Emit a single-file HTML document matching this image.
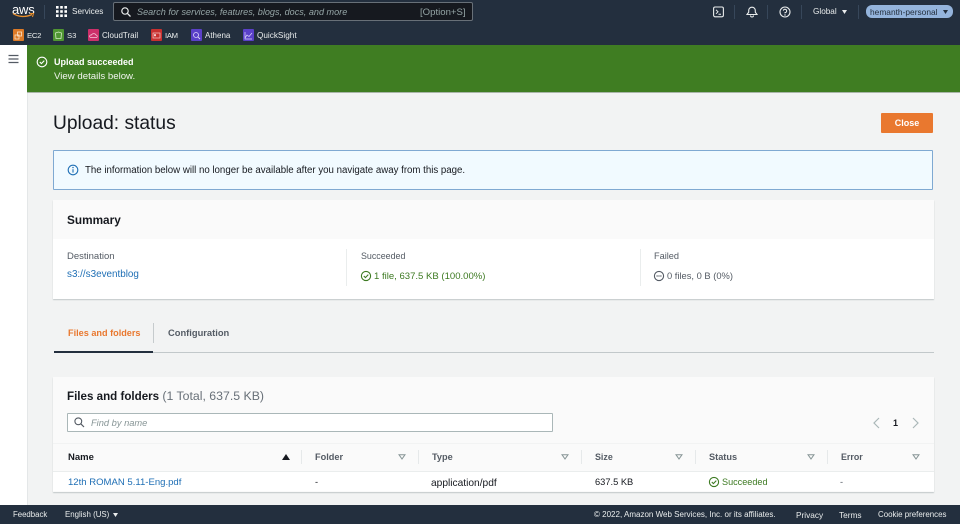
<!DOCTYPE html>
<html lang="en"><head><meta charset="utf-8"><title>Upload: status</title>
<style>
html,body{margin:0;padding:0}
body{width:960px;height:524px;overflow:hidden;position:relative;background:#f2f3f3;font-family:"Liberation Sans",sans-serif;font-size:9px;color:#16191f}
.a,.t,svg{position:absolute}
.t{white-space:nowrap;line-height:12px}
.b{font-weight:700}
.w{color:#eaeded}
.l{color:#1f6fb5}
.g{color:#3d7a22}
.m{color:#545b64}
.h{color:#545b64;font-weight:700}
.ic{width:11px;height:12px;border-radius:1px}
.sv{width:1px;height:14px;background:#e6e9ea;top:450px}
</style></head><body>

<div class="a" style="left:0;top:0;width:960px;height:45px;background:#232f3e"></div>
<div class="t" style="left:12px;top:2px;color:#fff;font-size:13px;line-height:16px;letter-spacing:-.2px">aws</div>
<svg style="left:12px;top:12px" width="23" height="7" viewBox="0 0 23 7"><path d="M1 1.5C6 5 14 5.5 20 2.5" fill="none" stroke="#ec912d" stroke-width="1.3"/><path d="M18 1.5L21.5 1.5L20.5 5" fill="none" stroke="#ec912d" stroke-width="1"/></svg>
<div class="a" style="left:44px;top:5px;width:1px;height:14px;background:#37475a"></div>
<svg style="left:56px;top:6px" width="11" height="11" viewBox="0 0 11 11" fill="#fff"><rect x="0" y="0" width="2.6" height="2.6"/><rect x="4.2" y="0" width="2.6" height="2.6"/><rect x="8.4" y="0" width="2.6" height="2.6"/><rect x="0" y="4.2" width="2.6" height="2.6"/><rect x="4.2" y="4.2" width="2.6" height="2.6"/><rect x="8.4" y="4.2" width="2.6" height="2.6"/><rect x="0" y="8.4" width="2.6" height="2.6"/><rect x="4.2" y="8.4" width="2.6" height="2.6"/><rect x="8.4" y="8.4" width="2.6" height="2.6"/></svg>
<div class="t w" style="left:72px;top:6px;font-size:8.2px">Services</div>

<div class="a" style="left:113px;top:2px;width:358px;height:17px;background:#16191f;border:1px solid #687078;border-radius:2px"></div>
<svg style="left:121px;top:7px" width="10" height="10" viewBox="0 0 10 10"><circle cx="4" cy="4" r="3.2" fill="none" stroke="#eaeded" stroke-width="1.2"/><path d="M6.4 6.4L9.5 9.5" stroke="#eaeded" stroke-width="1.3"/></svg>
<div class="t" style="left:137px;top:6px;font-style:italic;color:#95a5a6;font-size:9.1px">Search for services, features, blogs, docs, and more</div>
<div class="t" style="left:420px;top:7px;color:#95a5a6;font-size:9.6px">[Option+S]</div>

<svg style="left:713px;top:6px" width="11" height="12" viewBox="0 0 11 12"><rect x=".6" y="1" width="9.8" height="9.8" rx="1.5" fill="none" stroke="#eaeded" stroke-width="1.1"/><path d="M3 3.8L5 5.8L3 7.8M5.5 8.2H8" fill="none" stroke="#eaeded" stroke-width="1"/></svg>
<div class="a" style="left:734px;top:5px;width:1px;height:14px;background:#37475a"></div>
<svg style="left:746px;top:6px" width="12" height="12" viewBox="0 0 12 12"><path d="M1 8.5H11L9.3 6.2V4.5A3.3 3.3 0 0 0 2.7 4.5V6.2Z" fill="none" stroke="#eaeded" stroke-width="1.1"/><path d="M4.5 9.5A1.5 1.5 0 0 0 7.5 9.5" fill="none" stroke="#eaeded"/></svg>
<div class="a" style="left:767px;top:5px;width:1px;height:14px;background:#37475a"></div>
<svg style="left:779px;top:6px" width="12" height="12" viewBox="0 0 12 12"><circle cx="6" cy="6" r="5" fill="none" stroke="#eaeded" stroke-width="1.1"/><path d="M4.3 4.6A1.7 1.7 0 1 1 6 6.6V7.4" fill="none" stroke="#eaeded"/><circle cx="6" cy="9" r=".7" fill="#eaeded"/></svg>
<div class="a" style="left:801px;top:5px;width:1px;height:14px;background:#37475a"></div>
<div class="t w" style="left:813px;top:6px;font-size:8.2px">Global</div>
<svg style="left:842px;top:10px" width="5" height="4" viewBox="0 0 5 4"><path d="M0 0H5L2.5 4Z" fill="#eaeded"/></svg>
<div class="a" style="left:858px;top:5px;width:1px;height:14px;background:#37475a"></div>
<div class="a" style="left:866px;top:5px;width:87px;height:13px;border-radius:6px;background:#94b4dc"></div>
<div class="t" style="left:870px;top:6px;color:#232f3e;font-size:8.4px">hemanth-personal</div>
<svg style="left:943px;top:10px" width="5" height="4" viewBox="0 0 5 4"><path d="M0 0H5L2.5 4Z" fill="#232f3e"/></svg>

<div class="a ic" style="left:13px;top:29px;background:#dd7a27"></div>
<svg style="left:14px;top:31px" width="9" height="9" viewBox="0 0 9 9"><rect x="3.5" y="1" width="4" height="4" fill="none" stroke="#fbe3c8" stroke-width=".8"/><rect x="1" y="4" width="4" height="4" fill="none" stroke="#fbe3c8" stroke-width=".8"/></svg>
<div class="t w" style="left:27px;top:30px;font-size:7.7px;letter-spacing:-.3px">EC2</div>
<div class="a ic" style="left:53px;top:29px;background:#4f9532"></div>
<svg style="left:54px;top:31px" width="9" height="9" viewBox="0 0 9 9"><path d="M1.5 2L4.5 1L7.5 2L7 7.5H2Z" fill="none" stroke="#d2eac4" stroke-width=".8"/></svg>
<div class="t w" style="left:67px;top:30px;font-size:7.7px">S3</div>
<div class="a ic" style="left:88px;top:29px;background:#cc2f6a"></div>
<svg style="left:89px;top:31px" width="9" height="9" viewBox="0 0 9 9"><path d="M1.5 6.5H7.5A1.3 1.3 0 0 0 7 4A2.5 2.5 0 0 0 2.5 4A1.3 1.3 0 0 0 1.5 6.5Z" fill="none" stroke="#f6c7da" stroke-width=".7"/></svg>
<div class="t w" style="left:102px;top:30px;font-size:8px">CloudTrail</div>
<div class="a ic" style="left:151px;top:29px;background:#c9302f"></div>
<svg style="left:152px;top:31px" width="9" height="9" viewBox="0 0 9 9"><rect x="1" y="2" width="7" height="5" fill="none" stroke="#f6c9c9" stroke-width=".7"/><rect x="2" y="3.2" width="2" height="2" fill="#f6c9c9"/></svg>
<div class="t w" style="left:165px;top:30px;font-size:7.7px;letter-spacing:-.3px">IAM</div>
<div class="a ic" style="left:191px;top:29px;background:#5a40c8"></div>
<svg style="left:192px;top:31px" width="9" height="9" viewBox="0 0 9 9"><circle cx="4" cy="4" r="2.5" fill="none" stroke="#ddd5fa" stroke-width=".8"/><path d="M5.8 5.8L8 8" stroke="#ddd5fa" stroke-width=".9"/></svg>
<div class="t w" style="left:205px;top:30px;font-size:8px">Athena</div>
<div class="a ic" style="left:243px;top:29px;background:#5a40c8"></div>
<svg style="left:244px;top:31px" width="9" height="9" viewBox="0 0 9 9"><path d="M1 7L3 4L5 5.5L8 2M1 1V8H8" fill="none" stroke="#ddd5fa" stroke-width=".7"/></svg>
<div class="t w" style="left:257px;top:30px;font-size:8.2px">QuickSight</div>

<div class="a" style="left:0;top:45px;width:27px;height:460px;background:#fff;border-right:1px solid #e4e7e8"></div>
<svg style="left:8px;top:54px" width="11" height="10" viewBox="0 0 11 10"><path d="M.5 1.5H10.5M.5 5H10.5M.5 8.5H10.5" stroke="#545b64" stroke-width="1.3"/></svg>

<div class="a" style="left:27px;top:45px;width:933px;height:47px;background:#3f7d22"></div>
<div class="a" style="left:27px;top:92px;width:933px;height:1px;background:#a9b5a8"></div>
<svg style="left:36px;top:56px" width="12" height="12" viewBox="0 0 12 12"><circle cx="6" cy="6" r="4.8" fill="none" stroke="#fff" stroke-width="1.1"/><path d="M3.8 6L5.4 7.6L8.3 4.6" fill="none" stroke="#fff" stroke-width="1.1"/></svg>
<div class="t b" style="left:54px;top:56px;color:#fff;font-size:9px">Upload succeeded</div>
<div class="t" style="left:54px;top:71px;color:#f0f4ee;font-size:9.65px">View details below.</div>

<div class="t" style="left:53px;top:112px;font-size:19.2px;line-height:23px;color:#16191f">Upload: status</div>
<div class="a" style="left:881px;top:113px;width:52px;height:20px;background:#e9782f;border-radius:1px"></div>
<div class="t b" style="left:881px;top:117px;width:52px;text-align:center;color:#fff">Close</div>

<div class="a" style="left:53px;top:150px;width:878px;height:38px;background:#f1faff;border:1px solid #7fa9d2;border-radius:1px"></div>
<svg style="left:67px;top:164px" width="12" height="12" viewBox="0 0 12 12"><circle cx="6" cy="6" r="4.8" fill="none" stroke="#1f6fb5" stroke-width="1.1"/><path d="M6 5.2V8.6" stroke="#1f6fb5" stroke-width="1.1"/><circle cx="6" cy="3.6" r=".7" fill="#1f6fb5"/></svg>
<div class="t" style="left:85px;top:165px;font-size:9.68px">The information below will no longer be available after you navigate away from this page.</div>

<div class="a" style="left:53px;top:200px;width:881px;height:99px;background:#fff;box-shadow:0 1px 1px rgba(0,28,36,.2)"></div>
<div class="a" style="left:53px;top:200px;width:881px;height:39px;background:#fafafa"></div>
<div class="t b" style="left:67px;top:213px;font-size:11.8px;line-height:14px">Summary</div>
<div class="a" style="left:346px;top:249px;width:1px;height:37px;background:#eaeded"></div>
<div class="a" style="left:640px;top:249px;width:1px;height:37px;background:#eaeded"></div>
<div class="t m" style="left:67px;top:251px;font-size:9.5px">Destination</div>
<div class="t l" style="left:67px;top:269px;font-size:9.9px">s3://s3eventblog</div>
<div class="t m" style="left:361px;top:250px;font-size:8.9px">Succeeded</div>
<svg style="left:360px;top:270px" width="12" height="12" viewBox="0 0 12 12"><circle cx="6" cy="6" r="4.6" fill="none" stroke="#3d7a22" stroke-width="1.1"/><path d="M3.8 6L5.4 7.6L8.3 4.6" fill="none" stroke="#3d7a22" stroke-width="1.1"/></svg>
<div class="t g" style="left:374px;top:271px;font-size:9.55px">1 file, 637.5 KB (100.00%)</div>
<div class="t m" style="left:654px;top:250px;font-size:9.2px">Failed</div>
<svg style="left:653px;top:270px" width="12" height="12" viewBox="0 0 12 12"><circle cx="6" cy="6" r="4.6" fill="none" stroke="#545b64" stroke-width="1.1"/><path d="M3.5 6H8.5" stroke="#545b64" stroke-width="1.2" stroke-dasharray="1.2 .7"/></svg>
<div class="t m" style="left:667px;top:270px;font-size:9.35px">0 files, 0 B (0%)</div>

<div class="t b" style="left:68px;top:327px;color:#e9782f;font-size:9.15px">Files and folders</div>
<div class="a" style="left:153px;top:323px;width:1px;height:20px;background:#c6cbcd"></div>
<div class="t h" style="left:168px;top:327px;font-size:9.35px">Configuration</div>
<div class="a" style="left:54px;top:352px;width:880px;height:1px;background:#c2c8ca"></div>
<div class="a" style="left:54px;top:351px;width:99px;height:2px;background:#232f3e"></div>

<div class="a" style="left:53px;top:377px;width:881px;height:115px;background:#fafafa;box-shadow:0 1px 1px rgba(0,28,36,.2)"></div>
<div class="t" style="left:67px;top:389px;font-size:11.6px;line-height:14px"><span class="b">Files and folders</span> <span style="color:#687078;font-size:12.3px">(1 Total, 637.5 KB)</span></div>
<div class="a" style="left:67px;top:413px;width:484px;height:17px;background:#fff;border:1px solid #aab7b8;border-radius:1px"></div>
<svg style="left:74px;top:417px" width="11" height="11" viewBox="0 0 11 11"><circle cx="4.3" cy="4.3" r="3.4" fill="none" stroke="#545b64" stroke-width="1.1"/><path d="M6.8 6.8L10 10" stroke="#545b64" stroke-width="1.2"/></svg>
<div class="t" style="left:91px;top:417px;font-style:italic;color:#879596;font-size:9.3px">Find by name</div>
<svg style="left:872px;top:417px" width="9" height="12" viewBox="0 0 9 12"><path d="M7 1L2 6L7 11" fill="none" stroke="#aab7b8" stroke-width="1.2"/></svg>
<div class="t b" style="left:893px;top:417px;font-size:9px">1</div>
<svg style="left:911px;top:417px" width="9" height="12" viewBox="0 0 9 12"><path d="M2 1L7 6L2 11" fill="none" stroke="#aab7b8" stroke-width="1.2"/></svg>

<div class="a" style="left:53px;top:443px;width:881px;height:1px;background:#f2f3f3"></div>
<div class="a" style="left:53px;top:471px;width:881px;height:20px;background:#fff"></div>
<div class="a" style="left:53px;top:471px;width:881px;height:1px;background:#eaeded"></div>
<div class="a sv" style="left:301px"></div><div class="a sv" style="left:418px"></div><div class="a sv" style="left:581px"></div><div class="a sv" style="left:695px"></div><div class="a sv" style="left:827px"></div>
<div class="t b" style="left:68px;top:452px;font-size:9.5px">Name</div>
<svg style="left:282px;top:454px" width="8" height="6" viewBox="0 0 8 6"><path d="M4 0L8 6H0Z" fill="#16191f"/></svg>
<div class="t h" style="left:315px;top:451px;font-size:9.2px">Folder</div>
<div class="t h" style="left:432px;top:451px;font-size:9.2px">Type</div>
<div class="t h" style="left:595px;top:451px;font-size:8.9px">Size</div>
<div class="t h" style="left:709px;top:451px;font-size:9.2px">Status</div>
<div class="t h" style="left:841px;top:451px;font-size:8.9px">Error</div>
<svg style="left:398px;top:454px" width="8" height="6" viewBox="0 0 8 6"><path d="M1 .7H7L4 5Z" fill="none" stroke="#879596"/></svg>
<svg style="left:561px;top:454px" width="8" height="6" viewBox="0 0 8 6"><path d="M1 .7H7L4 5Z" fill="none" stroke="#879596"/></svg>
<svg style="left:675px;top:454px" width="8" height="6" viewBox="0 0 8 6"><path d="M1 .7H7L4 5Z" fill="none" stroke="#879596"/></svg>
<svg style="left:807px;top:454px" width="8" height="6" viewBox="0 0 8 6"><path d="M1 .7H7L4 5Z" fill="none" stroke="#879596"/></svg>
<svg style="left:912px;top:454px" width="8" height="6" viewBox="0 0 8 6"><path d="M1 .7H7L4 5Z" fill="none" stroke="#879596"/></svg>

<div class="t l" style="left:68px;top:477px;font-size:9.55px">12th ROMAN 5.11-Eng.pdf</div>
<div class="t" style="left:315px;top:476px;font-size:9.2px">-</div>
<div class="t" style="left:431px;top:478px;font-size:10.2px">application/pdf</div>
<div class="t" style="left:595px;top:476px;font-size:9.3px">637.5 KB</div>
<svg style="left:708px;top:476px" width="12" height="12" viewBox="0 0 12 12"><circle cx="6" cy="6" r="4.6" fill="none" stroke="#3d7a22" stroke-width="1.1"/><path d="M3.8 6L5.4 7.6L8.3 4.6" fill="none" stroke="#3d7a22" stroke-width="1.1"/></svg>
<div class="t g" style="left:722px;top:476px;font-size:9.1px">Succeeded</div>
<div class="t m" style="left:840px;top:476px;font-size:9.2px">-</div>

<div class="a" style="left:0;top:505px;width:960px;height:19px;background:#232f3e"></div>
<div class="t w" style="left:13px;top:509px;font-size:7.8px">Feedback</div>
<div class="t w" style="left:65px;top:509px;font-size:7.9px">English (US)</div>
<svg style="left:113px;top:513px" width="5" height="4" viewBox="0 0 5 4"><path d="M0 0H5L2.5 4Z" fill="#eaeded"/></svg>
<div class="t w" style="left:594px;top:509px;font-size:8.02px">© 2022, Amazon Web Services, Inc. or its affiliates.</div>
<div class="t w" style="left:796px;top:509px;font-size:8.3px">Privacy</div>
<div class="t w" style="left:839px;top:509px;font-size:8.3px">Terms</div>
<div class="t w" style="left:878px;top:509px;font-size:7.9px">Cookie preferences</div>
</body></html>
